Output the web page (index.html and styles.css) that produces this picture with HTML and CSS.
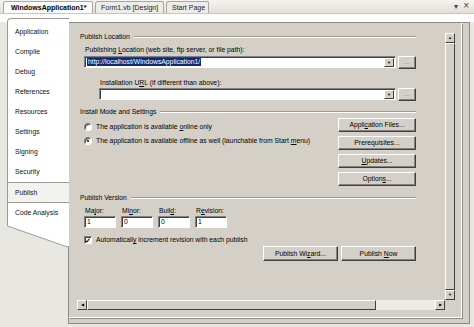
FILE: index.html
```html
<!DOCTYPE html>
<html lang="en">
<head>
  <meta charset="UTF-8" />
  <title>WindowsApplication1 - Publish</title>
  <link rel="stylesheet" href="styles.css">
</head>
<body>

  <div class="tabstrip">
    <div class="doc-tab active">WindowsApplication1*</div>
    <div class="doc-tab form">Form1.vb [Design]</div>
    <div class="doc-tab start">Start Page</div>
    <div class="tab-tools">
      <span class="tool">&#9662;</span>
      <span class="tool close">&#215;</span>
    </div>
  </div>

  <div class="workspace">
    <div class="side">
      <div class="nav">
        <div class="nav-item">Application</div>
        <div class="nav-item">Compile</div>
        <div class="nav-item">Debug</div>
        <div class="nav-item">References</div>
        <div class="nav-item">Resources</div>
        <div class="nav-item">Settings</div>
        <div class="nav-item">Signing</div>
        <div class="nav-item">Security</div>
        <div class="nav-item selected">Publish</div>
        <div class="nav-item">Code Analysis</div>
      </div>
      <svg class="nav-tail" width="62" height="24" viewBox="0 0 62 24">
        <polygon points="0,0 62,0 62,24 59,24 0,3" fill="#fff" />
        <polyline points="0.5,0 0.5,3 59,23.5 62,23.5" fill="none" stroke="#9a9a96" stroke-width="1" />
      </svg>
    </div>

    <div class="panel">
      <div class="frame">
        <div class="content">

          <div class="group-title"><span>Publish Location</span><i class="rule"></i></div>
          <div class="label indent">Publishing <u>L</u>ocation (web site, ftp server, or file path):</div>
          <div class="combo-row indent">
            <div class="combo">
              <span class="selection">http://localhost/WindowsApplication1/</span>
              <span class="drop">&#9660;</span>
            </div>
            <div class="button browse">...</div>
          </div>
          <div class="label url-label">Installation U<u>R</u>L (if different than above):</div>
          <div class="combo-row url-row">
            <div class="combo">
              <span class="drop">&#9660;</span>
            </div>
            <div class="button browse">...</div>
          </div>

          <div class="group-title second"><span>Install Mode and Settings</span><i class="rule"></i></div>
          <div class="install">
            <div class="options">
              <div class="choice"><span class="radio"></span><span>The application is available <u>o</u>nline only</span></div>
              <div class="choice"><span class="radio checked"></span><span>The application is available offline as well (launchable from Start <u>m</u>enu)</span></div>
            </div>
            <div class="side-buttons">
              <div class="button">Appli<u>c</u>ation Files...</div>
              <div class="button">Prerequisites...</div>
              <div class="button"><u>U</u>pdates...</div>
              <div class="button">Option<u>s</u>...</div>
            </div>
          </div>

          <div class="group-title third"><span>Publish Version</span><i class="rule"></i></div>
          <div class="version">
            <div class="part"><span>Ma<u>j</u>or:</span><div class="field">1</div></div>
            <div class="part"><span>Mi<u>n</u>or:</span><div class="field">0</div></div>
            <div class="part"><span>Buil<u>d</u>:</span><div class="field">0</div></div>
            <div class="part"><span>R<u>e</u>vision:</span><div class="field">1</div></div>
          </div>
          <div class="choice check-row"><span class="checkbox">&#10003;</span><span>Automaticall<u>y</u> increment revision with each publish</span></div>

          <div class="actions">
            <div class="button wide">Publish Wi<u>z</u>ard...</div>
            <div class="button wide">Publish <u>N</u>ow</div>
          </div>
        </div>

        <div class="vscroll">
          <div class="arrow">&#9650;</div>
          <div class="thumb"></div>
          <div class="arrow">&#9660;</div>
        </div>
        <div class="hscroll">
          <div class="arrow">&#9664;</div>
          <div class="thumb"></div>
          <div class="track"></div>
          <div class="arrow">&#9654;</div>
        </div>
        <div class="corner"></div>
      </div>
    </div>
  </div>

</body>
</html>
```

FILE: styles.css
```css
body {
  margin: 0;
  width: 474px;
  height: 327px;
  overflow: hidden;
  background: #e9e7e1;
  font-family: 'Liberation Sans', Arial, sans-serif;
  font-size: 6.8px;
  color: #000;
}

u {
  text-decoration: underline;
  text-underline-offset: 1px;
}

/* document tabs */
.tabstrip {
  height: 14px;
  display: flex;
  align-items: flex-end;
  padding-left: 3px;
  background: linear-gradient(#f4f3ef, #e2e0d9);
  border-bottom: 1px solid #c8c6bf;
  box-sizing: border-box;
}

.doc-tab {
  height: 12px;
  line-height: 12px;
  margin-right: 2px;
  border: 1px solid #a9a7a0;
  border-bottom: none;
  border-radius: 3px 2px 0 0;
  background: #eeece6;
  color: #222;
  font-size: 7px;
  box-sizing: border-box;
  white-space: nowrap;
}

.doc-tab.active {
  width: 90px;
  padding-left: 7px;
  background: #fbfbf9;
  font-weight: bold;
  color: #000;
}

.doc-tab.form {
  width: 69px;
  padding-left: 5px;
}

.doc-tab.start {
  width: 43px;
  padding-left: 5px;
}

.tab-tools {
  margin-left: auto;
  display: flex;
  gap: 5px;
  padding-right: 5px;
  align-self: center;
  color: #444;
  font-size: 8px;
}

.tool.close {
  font-size: 10px;
  line-height: 8px;
}

/* main area */
.workspace {
  display: flex;
  height: 313px;
  background: linear-gradient(#fdfdfc 0, #fdfdfc 8px, #e9e7e1 8px);
}

.side {
  width: 62px;
  margin: 4px 0 0 7px;
  position: relative;
  z-index: 1;
}

.nav {
  background: #fff;
  border: 1px solid #9a9a96;
  border-right: none;
  border-bottom: none;
  border-radius: 4px 0 0 0;
  padding-top: 3px;
}

.nav-item {
  height: 20px;
  line-height: 20px;
  padding-left: 7px;
  color: #111;
}

.nav-item.selected {
  height: 19px;
  line-height: 19px;
  background: #f3f2ee;
  border-top: 1px solid #9a9a96;
  border-bottom: 1px solid #9a9a96;
}

.nav-tail {
  display: block;
}

.panel {
  margin: 8px 4px 3px -1px;
  flex: 1;
  background: #d4d0c8;
  border: 1px solid #8d8b85;
  padding: 0 7px 5px 0;
  display: flex;
}

.frame {
  flex: 1;
  display: grid;
  grid-template-columns: 1fr 10px;
  grid-template-rows: 1fr 10px;
  padding: 10px 6px 7px 8px;
  border-right: 1px solid #fff;
  border-bottom: 1px solid #fff;
  box-shadow: 1px 1px 0 #8d8b85;
}

.content {
  padding: 0 29px 0 3px;
  overflow: hidden;
}

.group-title {
  display: flex;
  align-items: center;
  gap: 4px;
  height: 8px;
  line-height: 8px;
}

.group-title .rule {
  flex: 1;
  height: 0;
  border-top: 1px solid #9d9a92;
  border-bottom: 1px solid #fff;
}

.group-title.second { margin-top: 7px; }
.group-title.third { margin-top: 8px; }

.label {
  height: 8px;
  line-height: 8px;
  margin-top: 5px;
}

.indent { margin-left: 5px; }
.combo-row.indent { margin-left: 4px; }

.url-label {
  margin-left: 20px;
  margin-top: 10px;
}

.combo-row {
  display: flex;
  gap: 2px;
  margin-top: 2px;
  height: 13px;
}

.url-row {
  margin-left: 19px;
  margin-top: 1px;
}

.combo {
  flex: 1;
  height: 12px;
  box-sizing: border-box;
  background: #fff;
  border: 1px solid;
  border-color: #808080 #fff #fff #808080;
  box-shadow: inset 1px 1px #404040;
  display: flex;
  align-items: center;
  padding: 1px;
}

.selection {
  background: #0c2a78;
  color: #fff;
  line-height: 8px;
  padding: 0 1px;
  margin-left: 1px;
}

.drop {
  margin-left: auto;
  width: 10px;
  height: 9px;
  box-sizing: border-box;
  background: #d4d0c8;
  border: 1px solid;
  border-color: #fff #404040 #404040 #fff;
  font-size: 4px;
  line-height: 7px;
  text-align: center;
}

.button {
  background: #d4d0c8;
  border: 1px solid;
  border-color: #fff #404040 #404040 #fff;
  box-shadow: inset -1px -1px #808080;
  box-sizing: border-box;
  text-align: center;
  white-space: nowrap;
}

.browse {
  width: 18px;
  height: 13px;
  line-height: 10px;
  color: #8a877f;
  letter-spacing: 0.5px;
}

.install {
  display: flex;
  margin-top: 2px;
}

.options {
  flex: 1;
  padding: 5px 0 0 4px;
}

.choice {
  display: flex;
  align-items: center;
  gap: 4px;
  height: 8px;
  line-height: 8px;
  margin-bottom: 6px;
  white-space: nowrap;
}

.radio {
  width: 8px;
  height: 8px;
  box-sizing: border-box;
  border-radius: 50%;
  background: #fff;
  border: 1px solid;
  border-color: #808080 #fff #fff #808080;
  box-shadow: inset 1px 1px #404040;
  display: flex;
  align-items: center;
  justify-content: center;
}

.radio.checked::after {
  content: "";
  width: 2px;
  height: 2px;
  border-radius: 50%;
  background: #000;
}

.side-buttons {
  display: flex;
  flex-direction: column;
  gap: 4px;
}

.side-buttons .button {
  width: 78px;
  height: 14px;
  line-height: 12px;
}

.version {
  display: flex;
  gap: 5px;
  margin: 5px 0 0 4px;
}

.part {
  display: flex;
  flex-direction: column;
  gap: 1px;
}

.part span {
  height: 8px;
  line-height: 8px;
  padding-left: 1px;
}

.field {
  width: 32px;
  height: 12px;
  box-sizing: border-box;
  background: #fff;
  border: 1px solid;
  border-color: #808080 #fff #fff #808080;
  box-shadow: inset 1px 1px #404040;
  padding-left: 2px;
  line-height: 10px;
}

.check-row {
  margin: 8px 0 0 4px;
}

.checkbox {
  width: 8px;
  height: 8px;
  box-sizing: border-box;
  background: #fff;
  border: 1px solid;
  border-color: #808080 #fff #fff #808080;
  box-shadow: inset 1px 1px #404040;
  font-size: 7px;
  line-height: 7px;
  text-align: center;
  font-weight: bold;
}

.actions {
  display: flex;
  justify-content: flex-end;
  gap: 3px;
  margin-top: 2px;
}

.actions .button {
  width: 75px;
  height: 15px;
  line-height: 13px;
}

/* scrollbars */
.vscroll {
  display: flex;
  flex-direction: column;
}

.hscroll {
  display: flex;
}

.arrow {
  width: 10px;
  height: 10px;
  box-sizing: border-box;
  background: #d4d0c8;
  border: 1px solid;
  border-color: #fff #404040 #404040 #fff;
  font-size: 4px;
  line-height: 8px;
  text-align: center;
  flex-shrink: 0;
}

.vscroll .thumb {
  flex: 1;
  background: #d4d0c8;
  border: 1px solid;
  border-color: #fff #404040 #404040 #fff;
}

.hscroll .thumb {
  width: 289px;
  background: #d4d0c8;
  border: 1px solid;
  border-color: #fff #404040 #404040 #fff;
  box-sizing: border-box;
}

.hscroll .track {
  flex: 1;
  background: #ecebe6;
}

.corner {
  background: #d4d0c8;
}
```
